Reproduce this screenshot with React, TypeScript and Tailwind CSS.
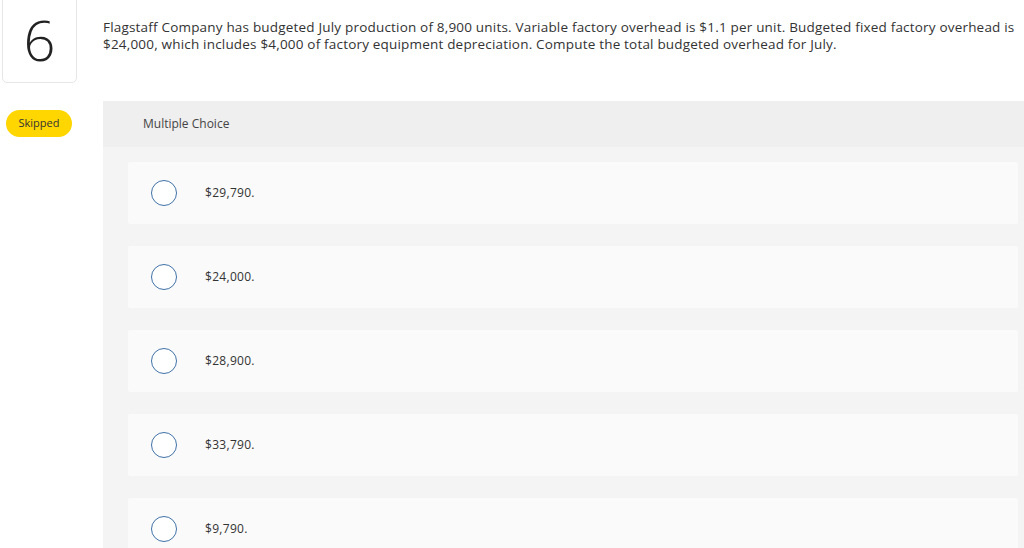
const options = ["$29,790.", "$24,000.", "$28,900.", "$33,790.", "$9,790."];

export default function App() {
  return (
    <div
      className="w-[1024px] h-[548px] overflow-hidden bg-white text-[#333]"
      style={{ fontFamily: "'Open Sans', Lato, sans-serif" }}
    >
      <div className="flex">
        {/* Left column */}
        <div className="w-[103px] shrink-0 flex flex-col">
          <div className="ml-[2px] mt-[-8px] w-[75px] h-[91px] border border-[#e6e6e6] rounded-[5px] flex items-center justify-center pt-[3px]">
            <span className="text-[56px] font-light leading-none text-[#222]">6</span>
          </div>
          <div className="mt-[27px] ml-[6px] w-[66px] h-[27px] rounded-full bg-[#ffd600] flex items-center justify-center text-[11px] text-[#333]">
            Skipped
          </div>
        </div>

        {/* Right column */}
        <div className="flex-1 flex flex-col">
          <p className="mt-[19px] pr-[3px] text-[13.5px] tracking-[0.19px] leading-[17px] text-[#333]">
            Flagstaff Company has budgeted July production of 8,900 units. Variable factory overhead is $1.1 per unit. Budgeted fixed factory overhead is $24,000, which includes $4,000 of factory equipment depreciation. Compute the total budgeted overhead for July.
          </p>

          <div className="mt-[48px] bg-[#f4f4f4]">
            <div className="h-[46px] bg-[#efefef] flex items-center pl-[40px] text-[12px] text-[#444]">
              Multiple Choice
            </div>
            <div className="flex flex-col gap-[22px] pt-[15px] pl-[25px] pr-[6px] pb-[20px]">
              {options.map((o) => (
                <div key={o} className="h-[62px] bg-[#fafafa] rounded-[2px] flex items-center pl-[23px]">
                  <span className="w-[26px] h-[26px] rounded-full border border-[#3f72a8] bg-white shrink-0" />
                  <span className="ml-[28px] text-[12px] tracking-[0.3px] text-[#333]">{o}</span>
                </div>
              ))}
            </div>
          </div>
        </div>
      </div>
    </div>
  );
}
